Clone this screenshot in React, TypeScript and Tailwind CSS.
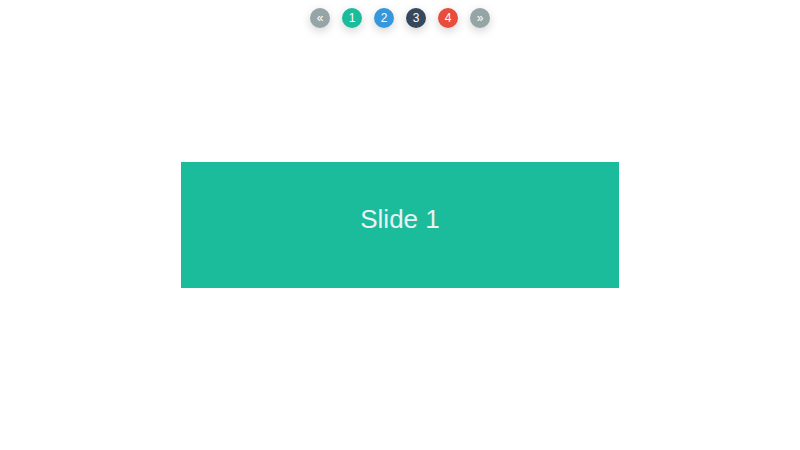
const dots = [
  { label: '«', color: 'bg-[#95a5a6]' },
  { label: '1', color: 'bg-[#1abc9c]' },
  { label: '2', color: 'bg-[#3498db]' },
  { label: '3', color: 'bg-[#34495e]' },
  { label: '4', color: 'bg-[#e74c3c]' },
  { label: '»', color: 'bg-[#95a5a6]' },
]

export default function App() {
  return (
    <div className="w-[800px] h-[450px] bg-white font-['Liberation_Sans',Arial,sans-serif] flex flex-col items-center">
      <nav className="flex gap-3 pt-2">
        {dots.map((d) => (
          <button
            key={d.label}
            className={`w-5 h-5 rounded-full ${d.color} text-white text-[12px] leading-5 text-center shadow-[0_3px_10px_rgba(0,0,0,0.18)]`}
          >
            {d.label}
          </button>
        ))}
      </nav>
      <div className="mt-[134px] w-[438px] h-[126px] bg-[#1abc9c] flex items-center justify-center pb-[12px]">
        <span className="text-[26px] text-[#ecf0f1]">Slide 1</span>
      </div>
    </div>
  )
}
